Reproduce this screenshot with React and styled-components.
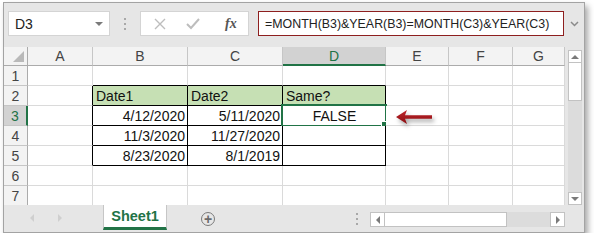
import React from 'react';
import styled, { createGlobalStyle } from 'styled-components';

const GREEN = '#217346';
const GRID = '#dadada';
const HEAD_LINE = '#c6c6c6';

// column widths taken from the sheet, row header first
const columns = [
  { key: 'A', width: 65 },
  { key: 'B', width: 95 },
  { key: 'C', width: 95 },
  { key: 'D', width: 103 },
  { key: 'E', width: 63 },
  { key: 'F', width: 64 },
  { key: 'G', width: 52 },
];
const rows = [1, 2, 3, 4, 5, 6, 7];

const cells = {
  B2: { text: 'Date1', align: 'left' },
  C2: { text: 'Date2', align: 'left' },
  D2: { text: 'Same?', align: 'left' },
  B3: { text: '4/12/2020' },
  C3: { text: '5/11/2020' },
  D3: { text: 'FALSE', align: 'center' },
  B4: { text: '11/3/2020' },
  C4: { text: '11/27/2020' },
  B5: { text: '8/23/2020' },
  C5: { text: '8/1/2019' },
};

const inTable = (ci, r) => ci >= 1 && ci <= 3 && r >= 2 && r <= 5;

const GlobalStyle = createGlobalStyle`
  body {
    margin: 0;
    background: #fff;
    font-family: "Liberation Sans", Arial, sans-serif;
  }
  * { box-sizing: border-box; }
`;

const Window = styled.div`
  margin: 2px 0 0 3px;
  width: 582px;
  height: 231px;
  border: 1px solid #a3a3a3;
  background: #e6e6e6;
  box-shadow: 3px 4px 6px rgba(0, 0, 0, 0.35);
  display: flex;
  flex-direction: column;
`;

const FormulaBar = styled.div`
  height: 44px;
  display: flex;
  align-items: flex-start;
  padding: 8px 0 0 4px;
`;

const NameBox = styled.div`
  width: 102px;
  height: 25px;
  background: #fff;
  border: 1px solid #d4d4d4;
  display: flex;
  align-items: center;
  justify-content: space-between;
  padding: 0 6px 0 6px;
  font-size: 14px;
  color: #222;
`;

const DownTri = styled.span`
  width: 0;
  height: 0;
  border-left: 4px solid transparent;
  border-right: 4px solid transparent;
  border-top: 4px solid ${(p) => p.$color || '#8a8a8a'};
`;

const Grip = styled.div`
  width: 30px;
  height: 25px;
  display: flex;
  flex-direction: column;
  align-items: center;
  justify-content: center;
  gap: 3px;
`;

const GripDot = styled.span`
  width: 2px;
  height: 2px;
  background: #a8a8a8;
`;

const ButtonsBox = styled.div`
  width: 109px;
  height: 25px;
  background: #fff;
  border: 1px solid #d4d4d4;
  display: flex;
  align-items: center;
  padding: 0 0 0 13px;
  gap: 20px;
  margin-right: 9px;
`;

const Fx = styled.span`
  font-family: "Liberation Serif", "Times New Roman", serif;
  font-style: italic;
  font-weight: bold;
  font-size: 14px;
  color: #555;
  margin-left: 5px;
`;

const FormulaBox = styled.div`
  width: 306px;
  height: 25px;
  background: #fff;
  border: 1.5px solid #8e1f1f;
  display: flex;
  align-items: center;
  padding-left: 6px;
  font-size: 12.4px;
  color: #222;
  white-space: nowrap;
  overflow: hidden;
`;

const Chevron = styled.div`
  width: 20px;
  height: 25px;
  display: flex;
  align-items: center;
  justify-content: center;
`;

const Main = styled.div`
  height: 158px;
  display: flex;
`;

const Grid = styled.div`
  position: relative;
  width: 561px;
  height: 158px;
  overflow: hidden;
  background: #fff;
  display: grid;
  grid-template-columns: 24px ${columns.map((c) => `${c.width}px`).join(' ')};
  grid-template-rows: 19px repeat(7, 20px);
`;

const Corner = styled.div`
  background: #f3f3f3;
  border-right: 1px solid #ababab;
  border-bottom: 1px solid #ababab;
  position: relative;
  &::after {
    content: '';
    position: absolute;
    right: 3px;
    bottom: 3px;
    border-left: 11px solid transparent;
    border-bottom: 11px solid #b9b9b9;
  }
`;

const ColHead = styled.div`
  background: ${(p) => (p.$active ? '#d2d2d2' : '#f3f3f3')};
  color: ${(p) => (p.$active ? GREEN : '#444')};
  border-right: 1px solid ${HEAD_LINE};
  border-bottom: ${(p) => (p.$active ? `2px solid ${GREEN}` : '1px solid #ababab')};
  display: flex;
  align-items: center;
  justify-content: center;
  font-size: 14px;
`;

const RowHead = styled.div`
  background: ${(p) => (p.$active ? '#d2d2d2' : '#f3f3f3')};
  color: ${(p) => (p.$active ? GREEN : '#444')};
  border-bottom: 1px solid ${HEAD_LINE};
  border-right: ${(p) => (p.$active ? `2px solid ${GREEN}` : '1px solid #ababab')};
  display: flex;
  align-items: center;
  justify-content: center;
  font-size: 14px;
`;

const Cell = styled.div`
  position: relative;
  background: ${(p) => p.$bg || '#fff'};
  border-right: 1px solid ${(p) => p.$right};
  border-bottom: 1px solid ${(p) => p.$bottom};
  display: flex;
  align-items: center;
  justify-content: ${(p) =>
    p.$align === 'left' ? 'flex-start' : p.$align === 'center' ? 'center' : 'flex-end'};
  padding: 1px 2px 0 3px;
  font-size: 14px;
  color: #111;
  white-space: nowrap;
`;

const Selection = styled.span`
  position: absolute;
  left: -2px;
  top: -2px;
  right: -2px;
  bottom: -2px;
  border: 2px solid ${GREEN};
  pointer-events: none;
  &::after {
    content: '';
    position: absolute;
    right: -4px;
    bottom: -4px;
    width: 6px;
    height: 6px;
    background: ${GREEN};
    border: 1px solid #fff;
  }
`;

const Arrow = styled.svg`
  position: absolute;
  left: 388px;
  top: 60px;
  filter: drop-shadow(2px 3px 2px rgba(0, 0, 0, 0.35));
`;

const VScroll = styled.div`
  width: 19px;
  padding: 3px 2px 0 3px;
  display: flex;
  flex-direction: column;
`;

const ScrollBtn = styled.div`
  width: ${(p) => p.$w || 14}px;
  height: ${(p) => p.$h || 14}px;
  background: #fff;
  border: 1px solid #c2c2c2;
  display: flex;
  align-items: center;
  justify-content: center;
  flex-shrink: 0;
`;

const VThumb = styled.div`
  height: 38px;
  background: #fff;
  border: 1px solid #c2c2c2;
  border-top: none;
`;

const VTrack = styled.div`
  flex: 1;
  background: #dcdcdc;
`;

const UpTri = styled.span`
  border-left: 4px solid transparent;
  border-right: 4px solid transparent;
  border-bottom: 4px solid #7a7a7a;
`;

const SideTri = styled.span`
  border-top: 4px solid transparent;
  border-bottom: 4px solid transparent;
  ${(p) => (p.$left ? 'border-right' : 'border-left')}: 4px solid ${(p) => p.$color || '#7a7a7a'};
`;

const TabBar = styled.div`
  height: 27px;
  display: flex;
  align-items: flex-start;
`;

const SheetNav = styled.div`
  width: 99px;
  height: 25px;
  display: flex;
  align-items: center;
  padding-left: 26px;
  gap: 24px;
`;

const Tab = styled.div`
  width: 64px;
  height: 25px;
  background: #fff;
  border-left: 1px solid #c6c6c6;
  border-right: 1px solid #c6c6c6;
  border-bottom: 3px solid ${GREEN};
  display: flex;
  align-items: center;
  justify-content: center;
  font-weight: bold;
  font-size: 14.5px;
  color: ${GREEN};
`;

const AddSheet = styled.div`
  width: 14px;
  height: 14px;
  margin: 7px 0 0 34px;
  border: 1.5px solid #7a7a7a;
  border-radius: 50%;
  display: flex;
  align-items: center;
  justify-content: center;
  font-size: 14px;
  font-weight: bold;
  line-height: 1;
  color: #6a6a6a;
`;

const TabGrip = styled(Grip)`
  width: 8px;
  height: 27px;
  margin-left: 138px;
  margin-right: 9px;
`;

const HScroll = styled.div`
  width: 195px;
  height: 15px;
  margin-top: 7px;
  display: flex;
`;

const HThumb = styled.div`
  width: 122px;
  background: #fff;
  border: 1px solid #c2c2c2;
  border-left: none;
`;

const HTrack = styled.div`
  flex: 1;
  background: #dcdcdc;
`;

const CloseIcon = () => (
  <svg width="12" height="12" viewBox="0 0 12 12">
    <path d="M1 1 L11 11 M11 1 L1 11" stroke="#bdbdbd" strokeWidth="1.4" />
  </svg>
);

const CheckIcon = () => (
  <svg width="14" height="12" viewBox="0 0 14 12">
    <path d="M1 6 L5 10 L13 1" stroke="#bdbdbd" strokeWidth="2" fill="none" />
  </svg>
);

const App = () => {
  return (
    <>
      <GlobalStyle />
      <Window>
        <FormulaBar>
          <NameBox>
            D3
            <DownTri $color="#7a7a7a" />
          </NameBox>
          <Grip>
            <GripDot />
            <GripDot />
            <GripDot />
          </Grip>
          <ButtonsBox>
            <CloseIcon />
            <CheckIcon />
            <Fx>fx</Fx>
          </ButtonsBox>
          <FormulaBox>=MONTH(B3)&amp;YEAR(B3)=MONTH(C3)&amp;YEAR(C3)</FormulaBox>
          <Chevron>
            <svg width="9" height="6" viewBox="0 0 9 6">
              <path d="M1 1 L4.5 4.5 L8 1" stroke="#8a8a8a" strokeWidth="1.5" fill="none" />
            </svg>
          </Chevron>
        </FormulaBar>

        <Main>
          <Grid>
            <Corner />
            {columns.map((c) => (
              <ColHead key={c.key} $active={c.key === 'D'}>
                {c.key}
              </ColHead>
            ))}
            {rows.map((r) => (
              <React.Fragment key={r}>
                <RowHead $active={r === 3}>{r}</RowHead>
                {columns.map((c, ci) => {
                  const id = `${c.key}${r}`;
                  const cell = cells[id];
                  const table = inTable(ci, r);
                  const right = table || (ci === 0 && r >= 2 && r <= 5) ? '#000' : GRID;
                  const bottom = table || (r === 1 && ci >= 1 && ci <= 3) ? '#000' : GRID;
                  return (
                    <Cell
                      key={id}
                      $right={right}
                      $bottom={bottom}
                      $bg={table && r === 2 ? '#c6e0b4' : null}
                      $align={cell?.align}
                    >
                      {cell?.text}
                      {id === 'D3' && <Selection />}
                    </Cell>
                  );
                })}
              </React.Fragment>
            ))}
            <Arrow width="40" height="20" viewBox="0 0 40 20">
              <defs>
                <linearGradient id="arrowFill" x1="0" y1="0" x2="0" y2="1">
                  <stop offset="0" stopColor="#c0272d" />
                  <stop offset="1" stopColor="#8b0c10" />
                </linearGradient>
              </defs>
              <path
                d="M4 10 L15 3 L13 8.2 L40 8.2 L40 11.8 L13 11.8 L15 17 Z"
                fill="url(#arrowFill)"
              />
            </Arrow>
          </Grid>

          <VScroll>
            <ScrollBtn $h={13}>
              <UpTri />
            </ScrollBtn>
            <VThumb />
            <VTrack />
            <ScrollBtn $h={13}>
              <DownTri $color="#7a7a7a" />
            </ScrollBtn>
          </VScroll>
        </Main>

        <TabBar>
          <SheetNav>
            <SideTri $left $color="#cfcfcf" />
            <SideTri $color="#cfcfcf" />
          </SheetNav>
          <Tab>Sheet1</Tab>
          <AddSheet>+</AddSheet>
          <TabGrip>
            <GripDot />
            <GripDot />
            <GripDot />
          </TabGrip>
          <HScroll>
            <ScrollBtn $w={15} $h={15}>
              <SideTri $left />
            </ScrollBtn>
            <HThumb />
            <HTrack />
            <ScrollBtn $w={15} $h={15}>
              <SideTri />
            </ScrollBtn>
          </HScroll>
        </TabBar>
      </Window>
    </>
  );
};

export default App;
